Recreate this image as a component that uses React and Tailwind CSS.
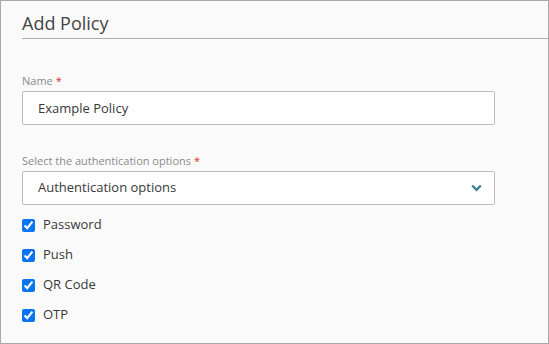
import { useState } from 'react';

const options = ['Password', 'Push', 'QR Code', 'OTP'];

export default function App() {
  const [name, setName] = useState('Example Policy');
  const [checked, setChecked] = useState({ Password: true, Push: true, 'QR Code': true, OTP: true });

  return (
    <div
      className="w-[549px] h-[344px] border border-[#a9a9a9] bg-[#fafafa] pl-[21px] text-[#333]"
      style={{ fontFamily: '"Open Sans", "Noto Sans", sans-serif' }}
    >
      <div className="h-[38px] border-b border-[#adadad] flex items-end pb-[2px]">
        <h1 className="text-[18px] leading-[26px] text-[#444]">Add Policy</h1>
      </div>

      <div className="w-[473px]">
        {/* name */}
        <label className="block mt-[34px] text-[11px] leading-[15px] text-[#8a8a8a]">
          Name <span className="text-[#e0312f]">*</span>
        </label>
        <input
          value={name}
          onChange={(e) => setName(e.target.value)}
          className="mt-[3px] w-full h-[34px] border border-[#bcbcbc] rounded-[2px] bg-white px-[15px] text-[13px] text-[#383838] outline-none"
          style={{ fontFamily: '"Open Sans", sans-serif' }}
        />

        {/* auth options */}
        <label className="block mt-[28px] text-[11px] leading-[15px] text-[#8a8a8a]">
          Select the authentication options <span className="text-[#e0312f]">*</span>
        </label>
        <div className="mt-[3px] h-[34px] border border-[#bcbcbc] rounded-[2px] bg-white pl-[15px] pr-[12px] flex items-center justify-between">
          <span className="text-[13px] text-[#383838]">Authentication options</span>
          <svg width="11" height="8" viewBox="0 0 11 8" fill="none">
            <polyline points="1.2,1.5 5.5,5.8 9.8,1.5" stroke="#3b7f8d" strokeWidth="2.4" />
          </svg>
        </div>

        <div className="mt-[5px] flex flex-col">
          {options.map((o) => (
            <label key={o} className="h-[30px] flex items-center gap-[8px] cursor-pointer">
              <input
                type="checkbox"
                checked={checked[o]}
                onChange={() => setChecked((prev) => ({ ...prev, [o]: !prev[o] }))}
                className="m-0 w-[13px] h-[13px] accent-[#0a75f0]"
              />
              <span className="text-[13px] text-[#383838]">{o}</span>
            </label>
          ))}
        </div>
      </div>
    </div>
  );
}
